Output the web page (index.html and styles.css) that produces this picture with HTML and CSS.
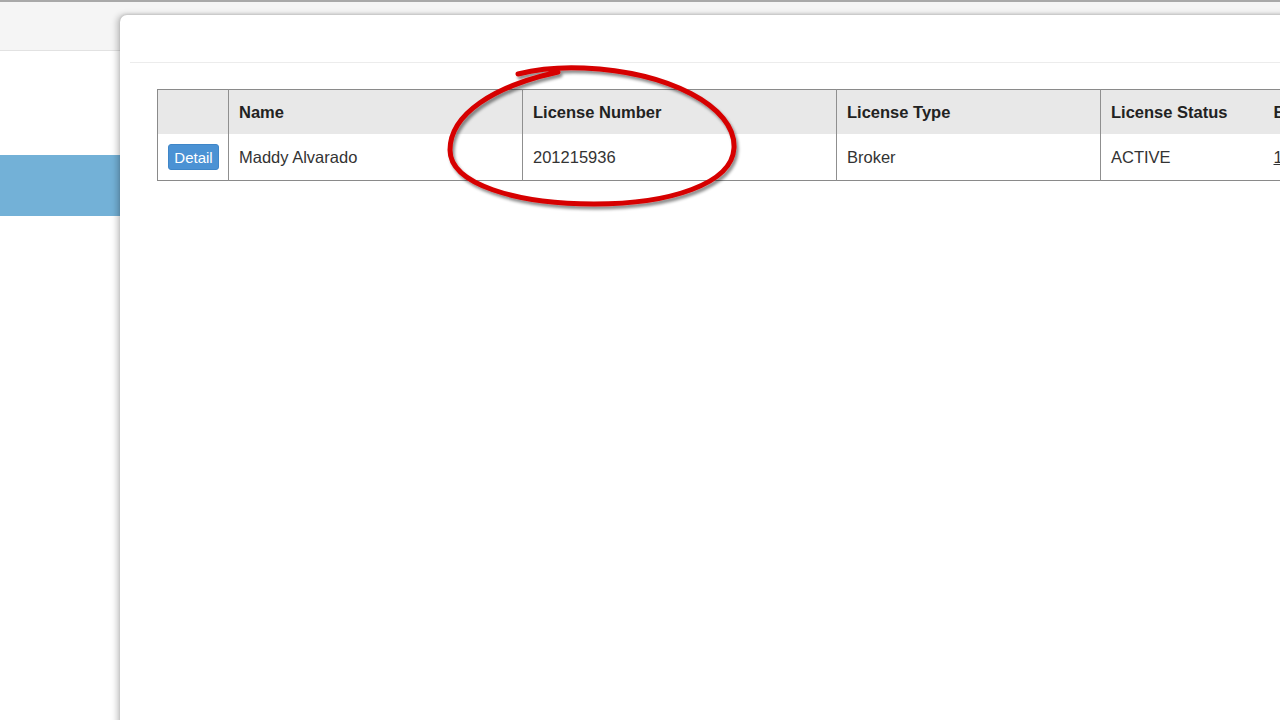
FILE: index.html
```html
<!DOCTYPE html>
<html>
<head>
<meta charset="utf-8">
<link rel="stylesheet" href="styles.css">
</head>
<body>
<div class="page">
  <div class="topline"></div>
  <div class="app">
    <div class="appbar"></div>
    <div class="sidebar">
      <div class="side-item"></div>
      <div class="side-item active"></div>
    </div>
  </div>

  <div class="modal">
    <div class="modal-header"></div>
    <div class="modal-body">
      <table class="results">
        <colgroup>
          <col class="c-btn"><col class="c-name"><col class="c-num"><col class="c-type"><col class="c-status"><col class="c-exp">
        </colgroup>
        <thead>
          <tr>
            <th></th>
            <th>Name</th>
            <th>License Number</th>
            <th>License Type</th>
            <th>License Status</th>
            <th class="last">Expiration Date</th>
          </tr>
        </thead>
        <tbody>
          <tr>
            <td class="btn-cell"><button class="btn-detail">Detail</button></td>
            <td>Maddy Alvarado</td>
            <td>201215936</td>
            <td>Broker</td>
            <td>ACTIVE</td>
            <td class="last"><a class="lnk">12/31/2017</a></td>
          </tr>
        </tbody>
      </table>
    </div>
    <svg class="circle" width="320" height="160" viewBox="0 0 320 160">
      <defs>
        <filter id="sh" x="-10%" y="-10%" width="130%" height="130%">
          <feDropShadow dx="2" dy="3" stdDeviation="1.6" flood-color="#000" flood-opacity="0.45"/>
        </filter>
      </defs>
      <path filter="url(#sh)" d="M 72 8 C 92 3, 118 1, 138 2 C 222 6, 290 40, 288 82 C 286 118, 224 138, 148 138 C 70 138, 4 118, 4 84 C 4 48, 48 20, 112 6" fill="none" stroke="#d60000" stroke-width="5" stroke-linecap="round"/>
    </svg>
  </div>
</div>
</body>
</html>
```

FILE: styles.css
```css
html, body {
  margin: 0;
  padding: 0;
  width: 1280px;
  height: 720px;
  overflow: hidden;
  background: #ffffff;
  font-family: "Liberation Sans", Arial, sans-serif;
}

.page {
  position: relative;
  width: 1280px;
  height: 720px;
  overflow: hidden;
}

.topline {
  height: 2px;
  background: #a9a9a9;
}

.app {
  display: flex;
  flex-direction: column;
}

.appbar {
  height: 48px;
  background: #f5f5f5;
  border-bottom: 1px solid #e2e2e2;
}

.sidebar {
  width: 120px;
  display: flex;
  flex-direction: column;
  padding-top: 104px;
}

.side-item {
  height: 61px;
}

.side-item.active {
  background: #73b1d7;
  order: -1;
}

.modal {
  position: absolute;
  left: 120px;
  top: 15px;
  width: 1300px;
  height: 800px;
  background: #ffffff;
  border-radius: 7px 0 0 0;
  box-shadow: -3px 0 6px rgba(0,0,0,0.22), 0 -1px 3px rgba(0,0,0,0.12);
}

.modal-header {
  height: 47px;
  margin-left: 10px;
  border-bottom: 1px solid #ececec;
}

.modal-body {
  padding: 26px 0 0 37px;
}

.results {
  border-collapse: collapse;
  table-layout: fixed;
  width: 1300px;
  border: 1px solid #8a8a8a;
  font-size: 16.5px;
}

.c-btn { width: 71px; }
.c-name { width: 294px; }
.c-num { width: 314px; }
.c-type { width: 264px; }
.c-status { width: 165px; }
.c-exp { width: 192px; }

.results th {
  background: #e8e8e8;
  color: #222;
  font-weight: bold;
  text-align: left;
  height: 44px;
  padding: 0 10px;
  border-left: 1px solid #8f8f8f;
  white-space: nowrap;
  overflow: hidden;
}

.results td {
  height: 46px;
  padding: 0 10px;
  color: #333;
  border-left: 1px solid #8f8f8f;
  white-space: nowrap;
  overflow: hidden;
}

.results th:first-child, .results td:first-child {
  border-left: none;
}

.results th.last, .results td.last {
  border-left: none;
  padding-left: 8px;
}

.results td.btn-cell {
  padding: 0 10px;
}

.btn-detail {
  display: block;
  width: 51px;
  height: 26px;
  padding: 0;
  border: 1px solid #3f86c8;
  border-radius: 3px;
  background: #4b92d4;
  color: #ffffff;
  font-family: "Liberation Sans", Arial, sans-serif;
  font-size: 15px;
}

.lnk {
  color: #333;
  text-decoration: underline;
}

.circle {
  position: absolute;
  left: 326px;
  top: 51px;
  overflow: visible;
}
```
